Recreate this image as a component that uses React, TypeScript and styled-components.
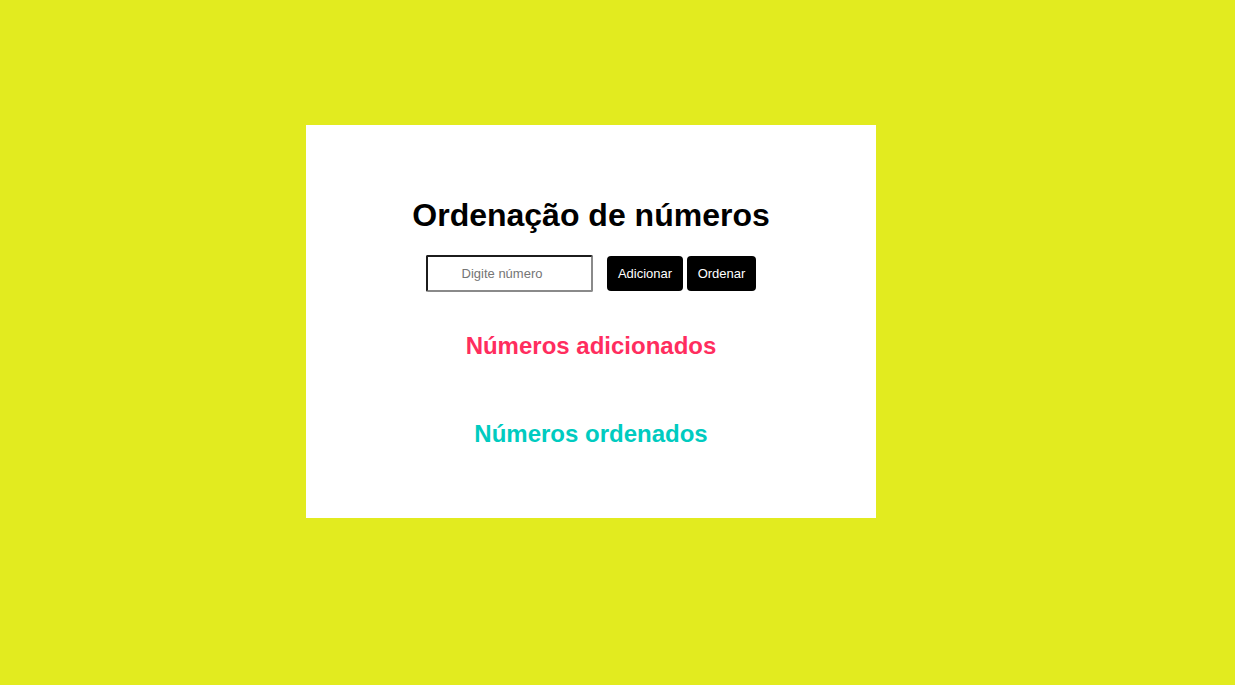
import React from "react";
import styled, { createGlobalStyle } from "styled-components";

const Global = createGlobalStyle`
  html, body { margin: 0; padding: 0; }
  body {
    background: #e2eb1f;
    font-family: "Liberation Sans", Arial, sans-serif;
    min-height: 685px;
  }
`;

const Page = styled.div`
  padding: 125px 0 0 306px;
`;

const Card = styled.main`
  width: 570px;
  height: 393px;
  box-sizing: border-box;
  background: #ffffff;
  padding-top: 72px;
  display: flex;
  flex-direction: column;
  align-items: center;
`;

const Title = styled.h1`
  margin: 0;
  font-size: 32px;
  font-weight: 700;
  color: #000;
  line-height: 37px;
`;

const Controls = styled.div`
  margin-top: 21px;
  display: flex;
  align-items: center;
`;

const NumberInput = styled.input`
  width: 167px;
  height: 37px;
  box-sizing: border-box;
  border-width: 2px;
  border-style: solid;
  border-color: #1c1c1c #8a8a8a #8a8a8a #1c1c1c;
  border-radius: 2px;
  text-align: center;
  font-family: "Liberation Sans", Arial, sans-serif;
  font-size: 13px;
  margin-right: 14px;
  &::placeholder { color: #757575; }
`;

const Button = styled.button<{ $w: number }>`
  width: ${p => p.$w}px;
  height: 35px;
  background: #000;
  color: #fff;
  border: none;
  border-radius: 4px;
  font-family: "Liberation Sans", Arial, sans-serif;
  font-size: 13px;
  padding: 0;
  & + & { margin-left: 4px; }
`;

const Subtitle = styled.h2<{ $color: string; $mt: number }>`
  margin: ${p => p.$mt}px 0 0;
  font-size: 24px;
  font-weight: 700;
  line-height: 28px;
  color: ${p => p.$color};
`;

export default function App() {
  return (
    <>
      <Global />
      <Page>
        <Card>
          <Title>Ordenação de números</Title>
          <Controls>
            <NumberInput type="number" placeholder="Digite número" />
            <Button $w={76}>Adicionar</Button>
            <Button $w={69}>Ordenar</Button>
          </Controls>
          <Subtitle $color="#ff2d5e" $mt={40}>Números adicionados</Subtitle>
          <Subtitle $color="#00cbc0" $mt={60}>Números ordenados</Subtitle>
        </Card>
      </Page>
    </>
  );
}
